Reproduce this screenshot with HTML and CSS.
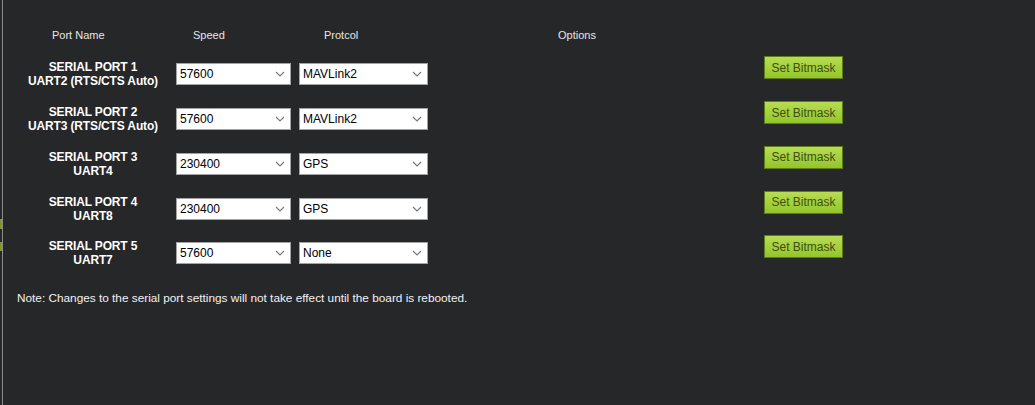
FILE: index.html
```html
<!DOCTYPE html>
<html lang="en">
<head>
    <meta charset="UTF-8">
    <meta name="viewport" content="width=device-width, initial-scale=1.0">
    <title>Serial Ports</title>
    <link rel="stylesheet" href="styles.css">
</head>
<body>
    <div class="edge">
        <span class="mark mark-a"></span>
        <span class="mark mark-b"></span>
    </div>

    <div class="panel">
        <div class="head">
            <span class="h-name">Port Name</span>
            <span class="h-speed">Speed</span>
            <span class="h-proto">Protcol</span>
            <span class="h-opts">Options</span>
        </div>

        <div class="row">
            <div class="label">SERIAL PORT 1<br>UART2 (RTS/CTS Auto)</div>
            <div class="combo speed"><span>57600</span><svg viewBox="0 0 10 6"><path d="M1 1l4 4 4-4"/></svg></div>
            <div class="combo proto"><span>MAVLink2</span><svg viewBox="0 0 10 6"><path d="M1 1l4 4 4-4"/></svg></div>
            <button class="bitmask">Set Bitmask</button>
        </div>
        <div class="row">
            <div class="label">SERIAL PORT 2<br>UART3 (RTS/CTS Auto)</div>
            <div class="combo speed"><span>57600</span><svg viewBox="0 0 10 6"><path d="M1 1l4 4 4-4"/></svg></div>
            <div class="combo proto"><span>MAVLink2</span><svg viewBox="0 0 10 6"><path d="M1 1l4 4 4-4"/></svg></div>
            <button class="bitmask">Set Bitmask</button>
        </div>
        <div class="row">
            <div class="label">SERIAL PORT 3<br>UART4</div>
            <div class="combo speed"><span>230400</span><svg viewBox="0 0 10 6"><path d="M1 1l4 4 4-4"/></svg></div>
            <div class="combo proto"><span>GPS</span><svg viewBox="0 0 10 6"><path d="M1 1l4 4 4-4"/></svg></div>
            <button class="bitmask">Set Bitmask</button>
        </div>
        <div class="row">
            <div class="label">SERIAL PORT 4<br>UART8</div>
            <div class="combo speed"><span>230400</span><svg viewBox="0 0 10 6"><path d="M1 1l4 4 4-4"/></svg></div>
            <div class="combo proto"><span>GPS</span><svg viewBox="0 0 10 6"><path d="M1 1l4 4 4-4"/></svg></div>
            <button class="bitmask">Set Bitmask</button>
        </div>
        <div class="row">
            <div class="label">SERIAL PORT 5<br>UART7</div>
            <div class="combo speed"><span>57600</span><svg viewBox="0 0 10 6"><path d="M1 1l4 4 4-4"/></svg></div>
            <div class="combo proto"><span>None</span><svg viewBox="0 0 10 6"><path d="M1 1l4 4 4-4"/></svg></div>
            <button class="bitmask">Set Bitmask</button>
        </div>

        <p class="note">Note: Changes to the serial port settings will not take effect until the board is rebooted.</p>
    </div>
</body>
</html>
```

FILE: styles.css
```css
html, body {
    margin: 0;
    height: 100%;
}
body {
    font-family: "Liberation Sans", Arial, sans-serif;
    background-color: #262729;
    color: #f2f2f2;
    overflow: hidden;
    position: relative;
}
.edge {
    position: absolute;
    left: 2px;
    top: 0;
    bottom: 0;
    width: 1px;
    background-color: #8c8c8c;
}
.mark {
    position: absolute;
    left: -2px;
    width: 2px;
    background-color: #7f9a2a;
}
.mark-a {
    top: 219px;
    height: 10px;
}
.mark-b {
    top: 242px;
    height: 9px;
}
.panel {
    padding: 27px 0 0 10px;
}
.head {
    display: flex;
    height: 16px;
    align-items: center;
    font-size: 11px;
    color: #e6e6e6;
    margin-bottom: 9px;
}
.h-name {
    margin-left: 42px;
    width: 141px;
}
.h-speed {
    width: 131px;
}
.h-proto {
    width: 234px;
}
.row {
    display: flex;
    align-items: center;
    height: 44.75px;
}
.label {
    width: 166px;
    text-align: center;
    font-size: 12px;
    font-weight: bold;
    line-height: 14px;
    letter-spacing: -0.15px;
    color: #ffffff;
}
.combo {
    box-sizing: border-box;
    height: 22px;
    display: flex;
    align-items: center;
    justify-content: space-between;
    background-color: #ffffff;
    border: 1px solid #a3a3a3;
    padding: 0 5px 0 3px;
    color: #000000;
    font-size: 12px;
}
.combo svg {
    width: 10px;
    height: 6px;
    fill: none;
    stroke: #7a7a7a;
    stroke-width: 1.2;
}
.speed {
    width: 115px;
    margin-right: 8px;
}
.proto {
    width: 129px;
}
.bitmask {
    box-sizing: border-box;
    width: 79px;
    height: 23px;
    margin-left: 336px;
    margin-bottom: 13px;
    padding: 0;
    border: 1px solid #5f7d16;
    background: linear-gradient(#b8dc52, #93c52b);
    color: #3d4f12;
    font-family: "Liberation Sans", Arial, sans-serif;
    font-size: 12px;
}
.note {
    margin: 15px 0 0 7px;
    font-size: 11.8px;
    color: #f2f2f2;
}
```
